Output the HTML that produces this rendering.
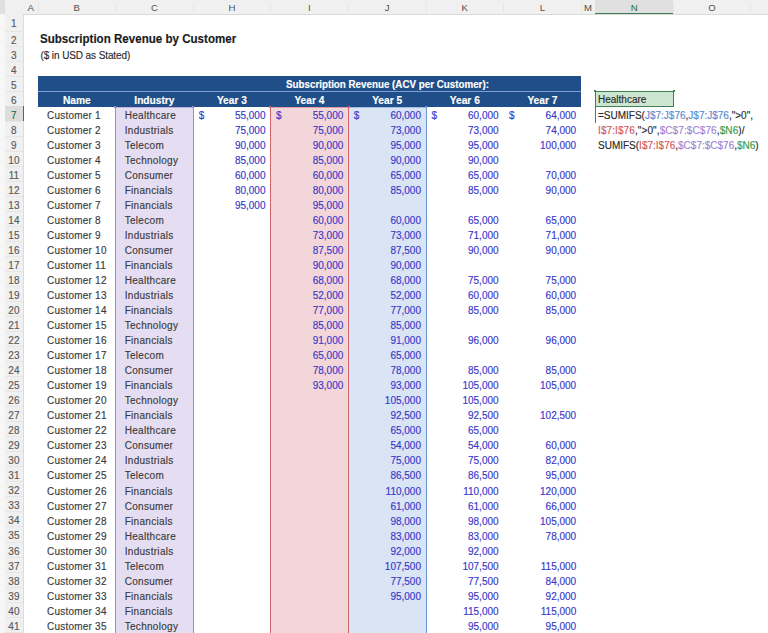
<!DOCTYPE html>
<html><head><meta charset="utf-8"><style>
html,body{margin:0;padding:0;}
body{width:768px;height:633px;overflow:hidden;position:relative;background:#fff;font-family:"Liberation Sans",sans-serif;}
body>div{position:absolute;}
.t{white-space:nowrap;-webkit-text-stroke:0.15px;}
</style></head><body>
<div style="left:0.00px;top:0.00px;width:768.00px;height:14.00px;background:#f0f0f0;"></div>
<div style="left:0.00px;top:13.60px;width:768.00px;height:1.00px;background:#dadada;"></div>
<div style="left:0.00px;top:0.00px;width:4.50px;height:14.00px;background:#e0e0e0;"></div>
<div style="left:4.50px;top:14.00px;width:18.80px;height:619.00px;background:#f0f0f0;"></div>
<div style="left:23.00px;top:14.00px;width:1.00px;height:619.00px;background:#dcdcdc;"></div>
<div style="left:0.00px;top:14.00px;width:4.50px;height:619.00px;background:#f7f7f7;"></div>
<div style="left:37.50px;top:3.00px;width:1.00px;height:10.00px;background:#e6e6e6;"></div>
<div style="left:115.00px;top:3.00px;width:1.00px;height:10.00px;background:#e6e6e6;"></div>
<div style="left:192.80px;top:3.00px;width:1.00px;height:10.00px;background:#e6e6e6;"></div>
<div style="left:270.00px;top:3.00px;width:1.00px;height:10.00px;background:#e6e6e6;"></div>
<div style="left:347.80px;top:3.00px;width:1.00px;height:10.00px;background:#e6e6e6;"></div>
<div style="left:425.50px;top:3.00px;width:1.00px;height:10.00px;background:#e6e6e6;"></div>
<div style="left:503.10px;top:3.00px;width:1.00px;height:10.00px;background:#e6e6e6;"></div>
<div style="left:580.70px;top:3.00px;width:1.00px;height:10.00px;background:#e6e6e6;"></div>
<div style="left:594.50px;top:3.00px;width:1.00px;height:10.00px;background:#e6e6e6;"></div>
<div style="left:672.80px;top:3.00px;width:1.00px;height:10.00px;background:#e6e6e6;"></div>
<div style="left:750.30px;top:3.00px;width:1.00px;height:10.00px;background:#e6e6e6;"></div>
<div style="left:827.50px;top:3.00px;width:1.00px;height:10.00px;background:#e6e6e6;"></div>
<div style="left:595.00px;top:0.00px;width:78.30px;height:14.00px;background:#e0e0e0;"></div>
<div style="left:595.00px;top:12.80px;width:78.30px;height:1.40px;background:#3f7d57;"></div>
<div class="t" style="left:23.30px;top:0.90px;-webkit-text-stroke:0;width:14.70px;text-align:center;line-height:14px;font-size:9.6px;color:#505050;">A</div>
<div class="t" style="left:38.00px;top:0.90px;-webkit-text-stroke:0;width:77.50px;text-align:center;line-height:14px;font-size:9.6px;color:#505050;">B</div>
<div class="t" style="left:115.50px;top:0.90px;-webkit-text-stroke:0;width:77.80px;text-align:center;line-height:14px;font-size:9.6px;color:#505050;">C</div>
<div class="t" style="left:193.30px;top:0.90px;-webkit-text-stroke:0;width:77.20px;text-align:center;line-height:14px;font-size:9.6px;color:#505050;">H</div>
<div class="t" style="left:270.50px;top:0.90px;-webkit-text-stroke:0;width:77.80px;text-align:center;line-height:14px;font-size:9.6px;color:#505050;">I</div>
<div class="t" style="left:348.30px;top:0.90px;-webkit-text-stroke:0;width:77.70px;text-align:center;line-height:14px;font-size:9.6px;color:#505050;">J</div>
<div class="t" style="left:426.00px;top:0.90px;-webkit-text-stroke:0;width:77.60px;text-align:center;line-height:14px;font-size:9.6px;color:#505050;">K</div>
<div class="t" style="left:503.60px;top:0.90px;-webkit-text-stroke:0;width:77.60px;text-align:center;line-height:14px;font-size:9.6px;color:#505050;">L</div>
<div class="t" style="left:581.20px;top:0.90px;-webkit-text-stroke:0;width:13.80px;text-align:center;line-height:14px;font-size:9.6px;color:#505050;">M</div>
<div class="t" style="left:595.00px;top:0.90px;-webkit-text-stroke:0;width:78.30px;text-align:center;line-height:14px;font-size:9.6px;color:#217346;">N</div>
<div class="t" style="left:673.30px;top:0.90px;-webkit-text-stroke:0;width:77.50px;text-align:center;line-height:14px;font-size:9.6px;color:#505050;">O</div>
<div class="t" style="left:750.80px;top:0.90px;-webkit-text-stroke:0;width:77.20px;text-align:center;line-height:14px;font-size:9.6px;color:#505050;">P</div>
<div style="left:4.50px;top:30.50px;width:18.80px;height:1.00px;background:#e6e6e6;"></div>
<div class="t" style="left:4.50px;top:16.00px;width:18.8px;text-align:center;line-height:16.50px;font-size:10px;color:#5a5a5a;">1</div>
<div style="left:4.50px;top:45.53px;width:18.80px;height:1.00px;background:#e6e6e6;"></div>
<div class="t" style="left:4.50px;top:32.50px;width:18.8px;text-align:center;line-height:15.03px;font-size:10px;color:#5a5a5a;">2</div>
<div style="left:4.50px;top:60.56px;width:18.80px;height:1.00px;background:#e6e6e6;"></div>
<div class="t" style="left:4.50px;top:47.53px;width:18.8px;text-align:center;line-height:15.03px;font-size:10px;color:#5a5a5a;">3</div>
<div style="left:4.50px;top:75.59px;width:18.80px;height:1.00px;background:#e6e6e6;"></div>
<div class="t" style="left:4.50px;top:62.56px;width:18.8px;text-align:center;line-height:15.03px;font-size:10px;color:#5a5a5a;">4</div>
<div style="left:4.50px;top:90.62px;width:18.80px;height:1.00px;background:#e6e6e6;"></div>
<div class="t" style="left:4.50px;top:77.59px;width:18.8px;text-align:center;line-height:15.03px;font-size:10px;color:#5a5a5a;">5</div>
<div style="left:4.50px;top:105.65px;width:18.80px;height:1.00px;background:#e6e6e6;"></div>
<div class="t" style="left:4.50px;top:92.62px;width:18.8px;text-align:center;line-height:15.03px;font-size:10px;color:#5a5a5a;">6</div>
<div style="left:4.50px;top:120.68px;width:18.80px;height:1.00px;background:#e6e6e6;"></div>
<div style="left:4.50px;top:106.15px;width:18.80px;height:15.03px;background:#dcdcdc;"></div>
<div style="left:22.50px;top:106.15px;width:1.50px;height:15.03px;background:#2e7d4f;"></div>
<div class="t" style="left:4.50px;top:107.65px;width:18.8px;text-align:center;line-height:15.03px;font-size:10px;color:#217346;">7</div>
<div style="left:4.50px;top:135.71px;width:18.80px;height:1.00px;background:#e6e6e6;"></div>
<div class="t" style="left:4.50px;top:122.68px;width:18.8px;text-align:center;line-height:15.03px;font-size:10px;color:#5a5a5a;">8</div>
<div style="left:4.50px;top:150.74px;width:18.80px;height:1.00px;background:#e6e6e6;"></div>
<div class="t" style="left:4.50px;top:137.71px;width:18.8px;text-align:center;line-height:15.03px;font-size:10px;color:#5a5a5a;">9</div>
<div style="left:4.50px;top:165.77px;width:18.80px;height:1.00px;background:#e6e6e6;"></div>
<div class="t" style="left:4.50px;top:152.74px;width:18.8px;text-align:center;line-height:15.03px;font-size:10px;color:#5a5a5a;">10</div>
<div style="left:4.50px;top:180.80px;width:18.80px;height:1.00px;background:#e6e6e6;"></div>
<div class="t" style="left:4.50px;top:167.77px;width:18.8px;text-align:center;line-height:15.03px;font-size:10px;color:#5a5a5a;">11</div>
<div style="left:4.50px;top:195.83px;width:18.80px;height:1.00px;background:#e6e6e6;"></div>
<div class="t" style="left:4.50px;top:182.80px;width:18.8px;text-align:center;line-height:15.03px;font-size:10px;color:#5a5a5a;">12</div>
<div style="left:4.50px;top:210.86px;width:18.80px;height:1.00px;background:#e6e6e6;"></div>
<div class="t" style="left:4.50px;top:197.83px;width:18.8px;text-align:center;line-height:15.03px;font-size:10px;color:#5a5a5a;">13</div>
<div style="left:4.50px;top:225.89px;width:18.80px;height:1.00px;background:#e6e6e6;"></div>
<div class="t" style="left:4.50px;top:212.86px;width:18.8px;text-align:center;line-height:15.03px;font-size:10px;color:#5a5a5a;">14</div>
<div style="left:4.50px;top:240.92px;width:18.80px;height:1.00px;background:#e6e6e6;"></div>
<div class="t" style="left:4.50px;top:227.89px;width:18.8px;text-align:center;line-height:15.03px;font-size:10px;color:#5a5a5a;">15</div>
<div style="left:4.50px;top:255.95px;width:18.80px;height:1.00px;background:#e6e6e6;"></div>
<div class="t" style="left:4.50px;top:242.92px;width:18.8px;text-align:center;line-height:15.03px;font-size:10px;color:#5a5a5a;">16</div>
<div style="left:4.50px;top:270.98px;width:18.80px;height:1.00px;background:#e6e6e6;"></div>
<div class="t" style="left:4.50px;top:257.95px;width:18.8px;text-align:center;line-height:15.03px;font-size:10px;color:#5a5a5a;">17</div>
<div style="left:4.50px;top:286.01px;width:18.80px;height:1.00px;background:#e6e6e6;"></div>
<div class="t" style="left:4.50px;top:272.98px;width:18.8px;text-align:center;line-height:15.03px;font-size:10px;color:#5a5a5a;">18</div>
<div style="left:4.50px;top:301.04px;width:18.80px;height:1.00px;background:#e6e6e6;"></div>
<div class="t" style="left:4.50px;top:288.01px;width:18.8px;text-align:center;line-height:15.03px;font-size:10px;color:#5a5a5a;">19</div>
<div style="left:4.50px;top:316.07px;width:18.80px;height:1.00px;background:#e6e6e6;"></div>
<div class="t" style="left:4.50px;top:303.04px;width:18.8px;text-align:center;line-height:15.03px;font-size:10px;color:#5a5a5a;">20</div>
<div style="left:4.50px;top:331.10px;width:18.80px;height:1.00px;background:#e6e6e6;"></div>
<div class="t" style="left:4.50px;top:318.07px;width:18.8px;text-align:center;line-height:15.03px;font-size:10px;color:#5a5a5a;">21</div>
<div style="left:4.50px;top:346.13px;width:18.80px;height:1.00px;background:#e6e6e6;"></div>
<div class="t" style="left:4.50px;top:333.10px;width:18.8px;text-align:center;line-height:15.03px;font-size:10px;color:#5a5a5a;">22</div>
<div style="left:4.50px;top:361.16px;width:18.80px;height:1.00px;background:#e6e6e6;"></div>
<div class="t" style="left:4.50px;top:348.13px;width:18.8px;text-align:center;line-height:15.03px;font-size:10px;color:#5a5a5a;">23</div>
<div style="left:4.50px;top:376.19px;width:18.80px;height:1.00px;background:#e6e6e6;"></div>
<div class="t" style="left:4.50px;top:363.16px;width:18.8px;text-align:center;line-height:15.03px;font-size:10px;color:#5a5a5a;">24</div>
<div style="left:4.50px;top:391.22px;width:18.80px;height:1.00px;background:#e6e6e6;"></div>
<div class="t" style="left:4.50px;top:378.19px;width:18.8px;text-align:center;line-height:15.03px;font-size:10px;color:#5a5a5a;">25</div>
<div style="left:4.50px;top:406.25px;width:18.80px;height:1.00px;background:#e6e6e6;"></div>
<div class="t" style="left:4.50px;top:393.22px;width:18.8px;text-align:center;line-height:15.03px;font-size:10px;color:#5a5a5a;">26</div>
<div style="left:4.50px;top:421.28px;width:18.80px;height:1.00px;background:#e6e6e6;"></div>
<div class="t" style="left:4.50px;top:408.25px;width:18.8px;text-align:center;line-height:15.03px;font-size:10px;color:#5a5a5a;">27</div>
<div style="left:4.50px;top:436.31px;width:18.80px;height:1.00px;background:#e6e6e6;"></div>
<div class="t" style="left:4.50px;top:423.28px;width:18.8px;text-align:center;line-height:15.03px;font-size:10px;color:#5a5a5a;">28</div>
<div style="left:4.50px;top:451.34px;width:18.80px;height:1.00px;background:#e6e6e6;"></div>
<div class="t" style="left:4.50px;top:438.31px;width:18.8px;text-align:center;line-height:15.03px;font-size:10px;color:#5a5a5a;">29</div>
<div style="left:4.50px;top:466.37px;width:18.80px;height:1.00px;background:#e6e6e6;"></div>
<div class="t" style="left:4.50px;top:453.34px;width:18.8px;text-align:center;line-height:15.03px;font-size:10px;color:#5a5a5a;">30</div>
<div style="left:4.50px;top:481.40px;width:18.80px;height:1.00px;background:#e6e6e6;"></div>
<div class="t" style="left:4.50px;top:468.37px;width:18.8px;text-align:center;line-height:15.03px;font-size:10px;color:#5a5a5a;">31</div>
<div style="left:4.50px;top:496.43px;width:18.80px;height:1.00px;background:#e6e6e6;"></div>
<div class="t" style="left:4.50px;top:483.40px;width:18.8px;text-align:center;line-height:15.03px;font-size:10px;color:#5a5a5a;">32</div>
<div style="left:4.50px;top:511.46px;width:18.80px;height:1.00px;background:#e6e6e6;"></div>
<div class="t" style="left:4.50px;top:498.43px;width:18.8px;text-align:center;line-height:15.03px;font-size:10px;color:#5a5a5a;">33</div>
<div style="left:4.50px;top:526.49px;width:18.80px;height:1.00px;background:#e6e6e6;"></div>
<div class="t" style="left:4.50px;top:513.46px;width:18.8px;text-align:center;line-height:15.03px;font-size:10px;color:#5a5a5a;">34</div>
<div style="left:4.50px;top:541.52px;width:18.80px;height:1.00px;background:#e6e6e6;"></div>
<div class="t" style="left:4.50px;top:528.49px;width:18.8px;text-align:center;line-height:15.03px;font-size:10px;color:#5a5a5a;">35</div>
<div style="left:4.50px;top:556.55px;width:18.80px;height:1.00px;background:#e6e6e6;"></div>
<div class="t" style="left:4.50px;top:543.52px;width:18.8px;text-align:center;line-height:15.03px;font-size:10px;color:#5a5a5a;">36</div>
<div style="left:4.50px;top:571.58px;width:18.80px;height:1.00px;background:#e6e6e6;"></div>
<div class="t" style="left:4.50px;top:558.55px;width:18.8px;text-align:center;line-height:15.03px;font-size:10px;color:#5a5a5a;">37</div>
<div style="left:4.50px;top:586.61px;width:18.80px;height:1.00px;background:#e6e6e6;"></div>
<div class="t" style="left:4.50px;top:573.58px;width:18.8px;text-align:center;line-height:15.03px;font-size:10px;color:#5a5a5a;">38</div>
<div style="left:4.50px;top:601.64px;width:18.80px;height:1.00px;background:#e6e6e6;"></div>
<div class="t" style="left:4.50px;top:588.61px;width:18.8px;text-align:center;line-height:15.03px;font-size:10px;color:#5a5a5a;">39</div>
<div style="left:4.50px;top:616.67px;width:18.80px;height:1.00px;background:#e6e6e6;"></div>
<div class="t" style="left:4.50px;top:603.64px;width:18.8px;text-align:center;line-height:15.03px;font-size:10px;color:#5a5a5a;">40</div>
<div style="left:4.50px;top:631.70px;width:18.80px;height:1.00px;background:#e6e6e6;"></div>
<div class="t" style="left:4.50px;top:618.67px;width:18.8px;text-align:center;line-height:15.03px;font-size:10px;color:#5a5a5a;">41</div>
<div style="left:4.50px;top:646.73px;width:18.80px;height:1.00px;background:#e6e6e6;"></div>
<div class="t" style="left:4.50px;top:633.70px;width:18.8px;text-align:center;line-height:15.03px;font-size:10px;color:#5a5a5a;">42</div>
<div class="t" style="left:40.30px;top:32.20px;transform:scaleX(0.95);transform-origin:0 0;font-weight:bold;font-size:12.2px;line-height:15.03px;color:#1b1b1b;">Subscription Revenue by Customer</div>
<div class="t" style="left:40.50px;top:47.63px;letter-spacing:-0.1px;font-size:10px;line-height:15px;color:#2b2b2b;">($ in USD as Stated)</div>
<div style="left:38.00px;top:76.40px;width:543.20px;height:30.40px;background:#1f4e88;"></div>
<div style="left:38.00px;top:91.10px;width:543.20px;height:1.00px;background:#7fa0d2;"></div>
<div class="t" style="left:286.20px;top:76.99px;transform:scaleX(0.961);transform-origin:0 0;font-weight:bold;font-size:10.2px;line-height:15px;color:#fff;">Subscription Revenue (ACV per Customer):</div>
<div class="t" style="left:38.00px;top:92.82px;width:77.50px;text-align:center;font-weight:bold;font-size:10.2px;line-height:15px;color:#fff;">Name</div>
<div class="t" style="left:115.50px;top:92.82px;width:77.80px;text-align:center;font-weight:bold;font-size:10.2px;line-height:15px;color:#fff;">Industry</div>
<div class="t" style="left:193.30px;top:92.82px;width:77.20px;text-align:center;font-weight:bold;font-size:10.2px;line-height:15px;color:#fff;">Year 3</div>
<div class="t" style="left:270.50px;top:92.82px;width:77.80px;text-align:center;font-weight:bold;font-size:10.2px;line-height:15px;color:#fff;">Year 4</div>
<div class="t" style="left:348.30px;top:92.82px;width:77.70px;text-align:center;font-weight:bold;font-size:10.2px;line-height:15px;color:#fff;">Year 5</div>
<div class="t" style="left:426.00px;top:92.82px;width:77.60px;text-align:center;font-weight:bold;font-size:10.2px;line-height:15px;color:#fff;">Year 6</div>
<div class="t" style="left:503.60px;top:92.82px;width:77.60px;text-align:center;font-weight:bold;font-size:10.2px;line-height:15px;color:#fff;">Year 7</div>
<div style="left:115.30px;top:106.60px;width:78.10px;height:528.40px;background:#e5def2;"></div>
<div style="left:348.50px;top:106.60px;width:77.60px;height:528.40px;background:#d9e4f5;"></div>
<div style="left:270.20px;top:106.60px;width:78.30px;height:528.40px;background:#f3d6d9;"></div>
<div style="left:114.80px;top:106.60px;width:1.00px;height:528.40px;background:#9c88cc;"></div>
<div style="left:192.90px;top:106.60px;width:1.00px;height:528.40px;background:#9c88cc;"></div>
<div style="left:115.30px;top:106.60px;width:78.10px;height:0.80px;background:#9c88cc;opacity:0.5;"></div>
<div style="left:114.30px;top:105.60px;width:2.00px;height:2.00px;background:#9c88cc;"></div>
<div style="left:192.40px;top:105.60px;width:2.00px;height:2.00px;background:#9c88cc;"></div>
<div style="left:348.00px;top:106.60px;width:1.00px;height:528.40px;background:#6e96d2;"></div>
<div style="left:425.60px;top:106.60px;width:1.00px;height:528.40px;background:#6e96d2;"></div>
<div style="left:348.50px;top:106.60px;width:77.60px;height:0.80px;background:#6e96d2;opacity:0.5;"></div>
<div style="left:347.50px;top:105.60px;width:2.00px;height:2.00px;background:#6e96d2;"></div>
<div style="left:425.10px;top:105.60px;width:2.00px;height:2.00px;background:#6e96d2;"></div>
<div style="left:269.70px;top:106.60px;width:1.00px;height:528.40px;background:#d0646c;"></div>
<div style="left:348.00px;top:106.60px;width:1.00px;height:528.40px;background:#d0646c;"></div>
<div style="left:270.20px;top:106.60px;width:78.30px;height:0.80px;background:#d0646c;opacity:0.5;"></div>
<div style="left:269.20px;top:105.60px;width:2.00px;height:2.00px;background:#d0646c;"></div>
<div style="left:347.50px;top:105.60px;width:2.00px;height:2.00px;background:#d0646c;"></div>
<div class="t" style="left:47.00px;top:107.75px;letter-spacing:0.22px;font-size:10px;line-height:15.03px;color:#3a3a3a;">Customer 1</div>
<div class="t" style="left:124.70px;top:107.75px;letter-spacing:0.3px;font-size:10px;line-height:15.03px;color:#3a3a3a;">Healthcare</div>
<div class="t" style="left:193.30px;top:107.75px;width:72.20px;text-align:right;font-size:10px;line-height:15.03px;color:#3838c8;">55,000</div>
<div class="t" style="left:198.80px;top:107.75px;font-size:10px;line-height:15.03px;color:#3838c8;">$</div>
<div class="t" style="left:270.50px;top:107.75px;width:72.80px;text-align:right;font-size:10px;line-height:15.03px;color:#3838c8;">55,000</div>
<div class="t" style="left:276.00px;top:107.75px;font-size:10px;line-height:15.03px;color:#3838c8;">$</div>
<div class="t" style="left:348.30px;top:107.75px;width:72.70px;text-align:right;font-size:10px;line-height:15.03px;color:#3838c8;">60,000</div>
<div class="t" style="left:353.80px;top:107.75px;font-size:10px;line-height:15.03px;color:#3838c8;">$</div>
<div class="t" style="left:426.00px;top:107.75px;width:72.60px;text-align:right;font-size:10px;line-height:15.03px;color:#3838c8;">60,000</div>
<div class="t" style="left:431.50px;top:107.75px;font-size:10px;line-height:15.03px;color:#3838c8;">$</div>
<div class="t" style="left:503.60px;top:107.75px;width:72.60px;text-align:right;font-size:10px;line-height:15.03px;color:#3838c8;">64,000</div>
<div class="t" style="left:509.10px;top:107.75px;font-size:10px;line-height:15.03px;color:#3838c8;">$</div>
<div class="t" style="left:47.00px;top:122.78px;letter-spacing:0.22px;font-size:10px;line-height:15.03px;color:#3a3a3a;">Customer 2</div>
<div class="t" style="left:124.70px;top:122.78px;letter-spacing:0.3px;font-size:10px;line-height:15.03px;color:#3a3a3a;">Industrials</div>
<div class="t" style="left:193.30px;top:122.78px;width:72.20px;text-align:right;font-size:10px;line-height:15.03px;color:#3838c8;">75,000</div>
<div class="t" style="left:270.50px;top:122.78px;width:72.80px;text-align:right;font-size:10px;line-height:15.03px;color:#3838c8;">75,000</div>
<div class="t" style="left:348.30px;top:122.78px;width:72.70px;text-align:right;font-size:10px;line-height:15.03px;color:#3838c8;">73,000</div>
<div class="t" style="left:426.00px;top:122.78px;width:72.60px;text-align:right;font-size:10px;line-height:15.03px;color:#3838c8;">73,000</div>
<div class="t" style="left:503.60px;top:122.78px;width:72.60px;text-align:right;font-size:10px;line-height:15.03px;color:#3838c8;">74,000</div>
<div class="t" style="left:47.00px;top:137.81px;letter-spacing:0.22px;font-size:10px;line-height:15.03px;color:#3a3a3a;">Customer 3</div>
<div class="t" style="left:124.70px;top:137.81px;letter-spacing:0.3px;font-size:10px;line-height:15.03px;color:#3a3a3a;">Telecom</div>
<div class="t" style="left:193.30px;top:137.81px;width:72.20px;text-align:right;font-size:10px;line-height:15.03px;color:#3838c8;">90,000</div>
<div class="t" style="left:270.50px;top:137.81px;width:72.80px;text-align:right;font-size:10px;line-height:15.03px;color:#3838c8;">90,000</div>
<div class="t" style="left:348.30px;top:137.81px;width:72.70px;text-align:right;font-size:10px;line-height:15.03px;color:#3838c8;">95,000</div>
<div class="t" style="left:426.00px;top:137.81px;width:72.60px;text-align:right;font-size:10px;line-height:15.03px;color:#3838c8;">95,000</div>
<div class="t" style="left:503.60px;top:137.81px;width:72.60px;text-align:right;font-size:10px;line-height:15.03px;color:#3838c8;">100,000</div>
<div class="t" style="left:47.00px;top:152.84px;letter-spacing:0.22px;font-size:10px;line-height:15.03px;color:#3a3a3a;">Customer 4</div>
<div class="t" style="left:124.70px;top:152.84px;letter-spacing:0.3px;font-size:10px;line-height:15.03px;color:#3a3a3a;">Technology</div>
<div class="t" style="left:193.30px;top:152.84px;width:72.20px;text-align:right;font-size:10px;line-height:15.03px;color:#3838c8;">85,000</div>
<div class="t" style="left:270.50px;top:152.84px;width:72.80px;text-align:right;font-size:10px;line-height:15.03px;color:#3838c8;">85,000</div>
<div class="t" style="left:348.30px;top:152.84px;width:72.70px;text-align:right;font-size:10px;line-height:15.03px;color:#3838c8;">90,000</div>
<div class="t" style="left:426.00px;top:152.84px;width:72.60px;text-align:right;font-size:10px;line-height:15.03px;color:#3838c8;">90,000</div>
<div class="t" style="left:47.00px;top:167.87px;letter-spacing:0.22px;font-size:10px;line-height:15.03px;color:#3a3a3a;">Customer 5</div>
<div class="t" style="left:124.70px;top:167.87px;letter-spacing:0.3px;font-size:10px;line-height:15.03px;color:#3a3a3a;">Consumer</div>
<div class="t" style="left:193.30px;top:167.87px;width:72.20px;text-align:right;font-size:10px;line-height:15.03px;color:#3838c8;">60,000</div>
<div class="t" style="left:270.50px;top:167.87px;width:72.80px;text-align:right;font-size:10px;line-height:15.03px;color:#3838c8;">60,000</div>
<div class="t" style="left:348.30px;top:167.87px;width:72.70px;text-align:right;font-size:10px;line-height:15.03px;color:#3838c8;">65,000</div>
<div class="t" style="left:426.00px;top:167.87px;width:72.60px;text-align:right;font-size:10px;line-height:15.03px;color:#3838c8;">65,000</div>
<div class="t" style="left:503.60px;top:167.87px;width:72.60px;text-align:right;font-size:10px;line-height:15.03px;color:#3838c8;">70,000</div>
<div class="t" style="left:47.00px;top:182.90px;letter-spacing:0.22px;font-size:10px;line-height:15.03px;color:#3a3a3a;">Customer 6</div>
<div class="t" style="left:124.70px;top:182.90px;letter-spacing:0.3px;font-size:10px;line-height:15.03px;color:#3a3a3a;">Financials</div>
<div class="t" style="left:193.30px;top:182.90px;width:72.20px;text-align:right;font-size:10px;line-height:15.03px;color:#3838c8;">80,000</div>
<div class="t" style="left:270.50px;top:182.90px;width:72.80px;text-align:right;font-size:10px;line-height:15.03px;color:#3838c8;">80,000</div>
<div class="t" style="left:348.30px;top:182.90px;width:72.70px;text-align:right;font-size:10px;line-height:15.03px;color:#3838c8;">85,000</div>
<div class="t" style="left:426.00px;top:182.90px;width:72.60px;text-align:right;font-size:10px;line-height:15.03px;color:#3838c8;">85,000</div>
<div class="t" style="left:503.60px;top:182.90px;width:72.60px;text-align:right;font-size:10px;line-height:15.03px;color:#3838c8;">90,000</div>
<div class="t" style="left:47.00px;top:197.93px;letter-spacing:0.22px;font-size:10px;line-height:15.03px;color:#3a3a3a;">Customer 7</div>
<div class="t" style="left:124.70px;top:197.93px;letter-spacing:0.3px;font-size:10px;line-height:15.03px;color:#3a3a3a;">Financials</div>
<div class="t" style="left:193.30px;top:197.93px;width:72.20px;text-align:right;font-size:10px;line-height:15.03px;color:#3838c8;">95,000</div>
<div class="t" style="left:270.50px;top:197.93px;width:72.80px;text-align:right;font-size:10px;line-height:15.03px;color:#3838c8;">95,000</div>
<div class="t" style="left:47.00px;top:212.96px;letter-spacing:0.22px;font-size:10px;line-height:15.03px;color:#3a3a3a;">Customer 8</div>
<div class="t" style="left:124.70px;top:212.96px;letter-spacing:0.3px;font-size:10px;line-height:15.03px;color:#3a3a3a;">Telecom</div>
<div class="t" style="left:270.50px;top:212.96px;width:72.80px;text-align:right;font-size:10px;line-height:15.03px;color:#3838c8;">60,000</div>
<div class="t" style="left:348.30px;top:212.96px;width:72.70px;text-align:right;font-size:10px;line-height:15.03px;color:#3838c8;">60,000</div>
<div class="t" style="left:426.00px;top:212.96px;width:72.60px;text-align:right;font-size:10px;line-height:15.03px;color:#3838c8;">65,000</div>
<div class="t" style="left:503.60px;top:212.96px;width:72.60px;text-align:right;font-size:10px;line-height:15.03px;color:#3838c8;">65,000</div>
<div class="t" style="left:47.00px;top:227.99px;letter-spacing:0.22px;font-size:10px;line-height:15.03px;color:#3a3a3a;">Customer 9</div>
<div class="t" style="left:124.70px;top:227.99px;letter-spacing:0.3px;font-size:10px;line-height:15.03px;color:#3a3a3a;">Industrials</div>
<div class="t" style="left:270.50px;top:227.99px;width:72.80px;text-align:right;font-size:10px;line-height:15.03px;color:#3838c8;">73,000</div>
<div class="t" style="left:348.30px;top:227.99px;width:72.70px;text-align:right;font-size:10px;line-height:15.03px;color:#3838c8;">73,000</div>
<div class="t" style="left:426.00px;top:227.99px;width:72.60px;text-align:right;font-size:10px;line-height:15.03px;color:#3838c8;">71,000</div>
<div class="t" style="left:503.60px;top:227.99px;width:72.60px;text-align:right;font-size:10px;line-height:15.03px;color:#3838c8;">71,000</div>
<div class="t" style="left:47.00px;top:243.02px;letter-spacing:0.22px;font-size:10px;line-height:15.03px;color:#3a3a3a;">Customer 10</div>
<div class="t" style="left:124.70px;top:243.02px;letter-spacing:0.3px;font-size:10px;line-height:15.03px;color:#3a3a3a;">Consumer</div>
<div class="t" style="left:270.50px;top:243.02px;width:72.80px;text-align:right;font-size:10px;line-height:15.03px;color:#3838c8;">87,500</div>
<div class="t" style="left:348.30px;top:243.02px;width:72.70px;text-align:right;font-size:10px;line-height:15.03px;color:#3838c8;">87,500</div>
<div class="t" style="left:426.00px;top:243.02px;width:72.60px;text-align:right;font-size:10px;line-height:15.03px;color:#3838c8;">90,000</div>
<div class="t" style="left:503.60px;top:243.02px;width:72.60px;text-align:right;font-size:10px;line-height:15.03px;color:#3838c8;">90,000</div>
<div class="t" style="left:47.00px;top:258.05px;letter-spacing:0.22px;font-size:10px;line-height:15.03px;color:#3a3a3a;">Customer 11</div>
<div class="t" style="left:124.70px;top:258.05px;letter-spacing:0.3px;font-size:10px;line-height:15.03px;color:#3a3a3a;">Financials</div>
<div class="t" style="left:270.50px;top:258.05px;width:72.80px;text-align:right;font-size:10px;line-height:15.03px;color:#3838c8;">90,000</div>
<div class="t" style="left:348.30px;top:258.05px;width:72.70px;text-align:right;font-size:10px;line-height:15.03px;color:#3838c8;">90,000</div>
<div class="t" style="left:47.00px;top:273.08px;letter-spacing:0.22px;font-size:10px;line-height:15.03px;color:#3a3a3a;">Customer 12</div>
<div class="t" style="left:124.70px;top:273.08px;letter-spacing:0.3px;font-size:10px;line-height:15.03px;color:#3a3a3a;">Healthcare</div>
<div class="t" style="left:270.50px;top:273.08px;width:72.80px;text-align:right;font-size:10px;line-height:15.03px;color:#3838c8;">68,000</div>
<div class="t" style="left:348.30px;top:273.08px;width:72.70px;text-align:right;font-size:10px;line-height:15.03px;color:#3838c8;">68,000</div>
<div class="t" style="left:426.00px;top:273.08px;width:72.60px;text-align:right;font-size:10px;line-height:15.03px;color:#3838c8;">75,000</div>
<div class="t" style="left:503.60px;top:273.08px;width:72.60px;text-align:right;font-size:10px;line-height:15.03px;color:#3838c8;">75,000</div>
<div class="t" style="left:47.00px;top:288.11px;letter-spacing:0.22px;font-size:10px;line-height:15.03px;color:#3a3a3a;">Customer 13</div>
<div class="t" style="left:124.70px;top:288.11px;letter-spacing:0.3px;font-size:10px;line-height:15.03px;color:#3a3a3a;">Industrials</div>
<div class="t" style="left:270.50px;top:288.11px;width:72.80px;text-align:right;font-size:10px;line-height:15.03px;color:#3838c8;">52,000</div>
<div class="t" style="left:348.30px;top:288.11px;width:72.70px;text-align:right;font-size:10px;line-height:15.03px;color:#3838c8;">52,000</div>
<div class="t" style="left:426.00px;top:288.11px;width:72.60px;text-align:right;font-size:10px;line-height:15.03px;color:#3838c8;">60,000</div>
<div class="t" style="left:503.60px;top:288.11px;width:72.60px;text-align:right;font-size:10px;line-height:15.03px;color:#3838c8;">60,000</div>
<div class="t" style="left:47.00px;top:303.14px;letter-spacing:0.22px;font-size:10px;line-height:15.03px;color:#3a3a3a;">Customer 14</div>
<div class="t" style="left:124.70px;top:303.14px;letter-spacing:0.3px;font-size:10px;line-height:15.03px;color:#3a3a3a;">Financials</div>
<div class="t" style="left:270.50px;top:303.14px;width:72.80px;text-align:right;font-size:10px;line-height:15.03px;color:#3838c8;">77,000</div>
<div class="t" style="left:348.30px;top:303.14px;width:72.70px;text-align:right;font-size:10px;line-height:15.03px;color:#3838c8;">77,000</div>
<div class="t" style="left:426.00px;top:303.14px;width:72.60px;text-align:right;font-size:10px;line-height:15.03px;color:#3838c8;">85,000</div>
<div class="t" style="left:503.60px;top:303.14px;width:72.60px;text-align:right;font-size:10px;line-height:15.03px;color:#3838c8;">85,000</div>
<div class="t" style="left:47.00px;top:318.17px;letter-spacing:0.22px;font-size:10px;line-height:15.03px;color:#3a3a3a;">Customer 15</div>
<div class="t" style="left:124.70px;top:318.17px;letter-spacing:0.3px;font-size:10px;line-height:15.03px;color:#3a3a3a;">Technology</div>
<div class="t" style="left:270.50px;top:318.17px;width:72.80px;text-align:right;font-size:10px;line-height:15.03px;color:#3838c8;">85,000</div>
<div class="t" style="left:348.30px;top:318.17px;width:72.70px;text-align:right;font-size:10px;line-height:15.03px;color:#3838c8;">85,000</div>
<div class="t" style="left:47.00px;top:333.20px;letter-spacing:0.22px;font-size:10px;line-height:15.03px;color:#3a3a3a;">Customer 16</div>
<div class="t" style="left:124.70px;top:333.20px;letter-spacing:0.3px;font-size:10px;line-height:15.03px;color:#3a3a3a;">Financials</div>
<div class="t" style="left:270.50px;top:333.20px;width:72.80px;text-align:right;font-size:10px;line-height:15.03px;color:#3838c8;">91,000</div>
<div class="t" style="left:348.30px;top:333.20px;width:72.70px;text-align:right;font-size:10px;line-height:15.03px;color:#3838c8;">91,000</div>
<div class="t" style="left:426.00px;top:333.20px;width:72.60px;text-align:right;font-size:10px;line-height:15.03px;color:#3838c8;">96,000</div>
<div class="t" style="left:503.60px;top:333.20px;width:72.60px;text-align:right;font-size:10px;line-height:15.03px;color:#3838c8;">96,000</div>
<div class="t" style="left:47.00px;top:348.23px;letter-spacing:0.22px;font-size:10px;line-height:15.03px;color:#3a3a3a;">Customer 17</div>
<div class="t" style="left:124.70px;top:348.23px;letter-spacing:0.3px;font-size:10px;line-height:15.03px;color:#3a3a3a;">Telecom</div>
<div class="t" style="left:270.50px;top:348.23px;width:72.80px;text-align:right;font-size:10px;line-height:15.03px;color:#3838c8;">65,000</div>
<div class="t" style="left:348.30px;top:348.23px;width:72.70px;text-align:right;font-size:10px;line-height:15.03px;color:#3838c8;">65,000</div>
<div class="t" style="left:47.00px;top:363.26px;letter-spacing:0.22px;font-size:10px;line-height:15.03px;color:#3a3a3a;">Customer 18</div>
<div class="t" style="left:124.70px;top:363.26px;letter-spacing:0.3px;font-size:10px;line-height:15.03px;color:#3a3a3a;">Consumer</div>
<div class="t" style="left:270.50px;top:363.26px;width:72.80px;text-align:right;font-size:10px;line-height:15.03px;color:#3838c8;">78,000</div>
<div class="t" style="left:348.30px;top:363.26px;width:72.70px;text-align:right;font-size:10px;line-height:15.03px;color:#3838c8;">78,000</div>
<div class="t" style="left:426.00px;top:363.26px;width:72.60px;text-align:right;font-size:10px;line-height:15.03px;color:#3838c8;">85,000</div>
<div class="t" style="left:503.60px;top:363.26px;width:72.60px;text-align:right;font-size:10px;line-height:15.03px;color:#3838c8;">85,000</div>
<div class="t" style="left:47.00px;top:378.29px;letter-spacing:0.22px;font-size:10px;line-height:15.03px;color:#3a3a3a;">Customer 19</div>
<div class="t" style="left:124.70px;top:378.29px;letter-spacing:0.3px;font-size:10px;line-height:15.03px;color:#3a3a3a;">Financials</div>
<div class="t" style="left:270.50px;top:378.29px;width:72.80px;text-align:right;font-size:10px;line-height:15.03px;color:#3838c8;">93,000</div>
<div class="t" style="left:348.30px;top:378.29px;width:72.70px;text-align:right;font-size:10px;line-height:15.03px;color:#3838c8;">93,000</div>
<div class="t" style="left:426.00px;top:378.29px;width:72.60px;text-align:right;font-size:10px;line-height:15.03px;color:#3838c8;">105,000</div>
<div class="t" style="left:503.60px;top:378.29px;width:72.60px;text-align:right;font-size:10px;line-height:15.03px;color:#3838c8;">105,000</div>
<div class="t" style="left:47.00px;top:393.32px;letter-spacing:0.22px;font-size:10px;line-height:15.03px;color:#3a3a3a;">Customer 20</div>
<div class="t" style="left:124.70px;top:393.32px;letter-spacing:0.3px;font-size:10px;line-height:15.03px;color:#3a3a3a;">Technology</div>
<div class="t" style="left:348.30px;top:393.32px;width:72.70px;text-align:right;font-size:10px;line-height:15.03px;color:#3838c8;">105,000</div>
<div class="t" style="left:426.00px;top:393.32px;width:72.60px;text-align:right;font-size:10px;line-height:15.03px;color:#3838c8;">105,000</div>
<div class="t" style="left:47.00px;top:408.35px;letter-spacing:0.22px;font-size:10px;line-height:15.03px;color:#3a3a3a;">Customer 21</div>
<div class="t" style="left:124.70px;top:408.35px;letter-spacing:0.3px;font-size:10px;line-height:15.03px;color:#3a3a3a;">Financials</div>
<div class="t" style="left:348.30px;top:408.35px;width:72.70px;text-align:right;font-size:10px;line-height:15.03px;color:#3838c8;">92,500</div>
<div class="t" style="left:426.00px;top:408.35px;width:72.60px;text-align:right;font-size:10px;line-height:15.03px;color:#3838c8;">92,500</div>
<div class="t" style="left:503.60px;top:408.35px;width:72.60px;text-align:right;font-size:10px;line-height:15.03px;color:#3838c8;">102,500</div>
<div class="t" style="left:47.00px;top:423.38px;letter-spacing:0.22px;font-size:10px;line-height:15.03px;color:#3a3a3a;">Customer 22</div>
<div class="t" style="left:124.70px;top:423.38px;letter-spacing:0.3px;font-size:10px;line-height:15.03px;color:#3a3a3a;">Healthcare</div>
<div class="t" style="left:348.30px;top:423.38px;width:72.70px;text-align:right;font-size:10px;line-height:15.03px;color:#3838c8;">65,000</div>
<div class="t" style="left:426.00px;top:423.38px;width:72.60px;text-align:right;font-size:10px;line-height:15.03px;color:#3838c8;">65,000</div>
<div class="t" style="left:47.00px;top:438.41px;letter-spacing:0.22px;font-size:10px;line-height:15.03px;color:#3a3a3a;">Customer 23</div>
<div class="t" style="left:124.70px;top:438.41px;letter-spacing:0.3px;font-size:10px;line-height:15.03px;color:#3a3a3a;">Consumer</div>
<div class="t" style="left:348.30px;top:438.41px;width:72.70px;text-align:right;font-size:10px;line-height:15.03px;color:#3838c8;">54,000</div>
<div class="t" style="left:426.00px;top:438.41px;width:72.60px;text-align:right;font-size:10px;line-height:15.03px;color:#3838c8;">54,000</div>
<div class="t" style="left:503.60px;top:438.41px;width:72.60px;text-align:right;font-size:10px;line-height:15.03px;color:#3838c8;">60,000</div>
<div class="t" style="left:47.00px;top:453.44px;letter-spacing:0.22px;font-size:10px;line-height:15.03px;color:#3a3a3a;">Customer 24</div>
<div class="t" style="left:124.70px;top:453.44px;letter-spacing:0.3px;font-size:10px;line-height:15.03px;color:#3a3a3a;">Industrials</div>
<div class="t" style="left:348.30px;top:453.44px;width:72.70px;text-align:right;font-size:10px;line-height:15.03px;color:#3838c8;">75,000</div>
<div class="t" style="left:426.00px;top:453.44px;width:72.60px;text-align:right;font-size:10px;line-height:15.03px;color:#3838c8;">75,000</div>
<div class="t" style="left:503.60px;top:453.44px;width:72.60px;text-align:right;font-size:10px;line-height:15.03px;color:#3838c8;">82,000</div>
<div class="t" style="left:47.00px;top:468.47px;letter-spacing:0.22px;font-size:10px;line-height:15.03px;color:#3a3a3a;">Customer 25</div>
<div class="t" style="left:124.70px;top:468.47px;letter-spacing:0.3px;font-size:10px;line-height:15.03px;color:#3a3a3a;">Telecom</div>
<div class="t" style="left:348.30px;top:468.47px;width:72.70px;text-align:right;font-size:10px;line-height:15.03px;color:#3838c8;">86,500</div>
<div class="t" style="left:426.00px;top:468.47px;width:72.60px;text-align:right;font-size:10px;line-height:15.03px;color:#3838c8;">86,500</div>
<div class="t" style="left:503.60px;top:468.47px;width:72.60px;text-align:right;font-size:10px;line-height:15.03px;color:#3838c8;">95,000</div>
<div class="t" style="left:47.00px;top:483.50px;letter-spacing:0.22px;font-size:10px;line-height:15.03px;color:#3a3a3a;">Customer 26</div>
<div class="t" style="left:124.70px;top:483.50px;letter-spacing:0.3px;font-size:10px;line-height:15.03px;color:#3a3a3a;">Financials</div>
<div class="t" style="left:348.30px;top:483.50px;width:72.70px;text-align:right;font-size:10px;line-height:15.03px;color:#3838c8;">110,000</div>
<div class="t" style="left:426.00px;top:483.50px;width:72.60px;text-align:right;font-size:10px;line-height:15.03px;color:#3838c8;">110,000</div>
<div class="t" style="left:503.60px;top:483.50px;width:72.60px;text-align:right;font-size:10px;line-height:15.03px;color:#3838c8;">120,000</div>
<div class="t" style="left:47.00px;top:498.53px;letter-spacing:0.22px;font-size:10px;line-height:15.03px;color:#3a3a3a;">Customer 27</div>
<div class="t" style="left:124.70px;top:498.53px;letter-spacing:0.3px;font-size:10px;line-height:15.03px;color:#3a3a3a;">Consumer</div>
<div class="t" style="left:348.30px;top:498.53px;width:72.70px;text-align:right;font-size:10px;line-height:15.03px;color:#3838c8;">61,000</div>
<div class="t" style="left:426.00px;top:498.53px;width:72.60px;text-align:right;font-size:10px;line-height:15.03px;color:#3838c8;">61,000</div>
<div class="t" style="left:503.60px;top:498.53px;width:72.60px;text-align:right;font-size:10px;line-height:15.03px;color:#3838c8;">66,000</div>
<div class="t" style="left:47.00px;top:513.56px;letter-spacing:0.22px;font-size:10px;line-height:15.03px;color:#3a3a3a;">Customer 28</div>
<div class="t" style="left:124.70px;top:513.56px;letter-spacing:0.3px;font-size:10px;line-height:15.03px;color:#3a3a3a;">Financials</div>
<div class="t" style="left:348.30px;top:513.56px;width:72.70px;text-align:right;font-size:10px;line-height:15.03px;color:#3838c8;">98,000</div>
<div class="t" style="left:426.00px;top:513.56px;width:72.60px;text-align:right;font-size:10px;line-height:15.03px;color:#3838c8;">98,000</div>
<div class="t" style="left:503.60px;top:513.56px;width:72.60px;text-align:right;font-size:10px;line-height:15.03px;color:#3838c8;">105,000</div>
<div class="t" style="left:47.00px;top:528.59px;letter-spacing:0.22px;font-size:10px;line-height:15.03px;color:#3a3a3a;">Customer 29</div>
<div class="t" style="left:124.70px;top:528.59px;letter-spacing:0.3px;font-size:10px;line-height:15.03px;color:#3a3a3a;">Healthcare</div>
<div class="t" style="left:348.30px;top:528.59px;width:72.70px;text-align:right;font-size:10px;line-height:15.03px;color:#3838c8;">83,000</div>
<div class="t" style="left:426.00px;top:528.59px;width:72.60px;text-align:right;font-size:10px;line-height:15.03px;color:#3838c8;">83,000</div>
<div class="t" style="left:503.60px;top:528.59px;width:72.60px;text-align:right;font-size:10px;line-height:15.03px;color:#3838c8;">78,000</div>
<div class="t" style="left:47.00px;top:543.62px;letter-spacing:0.22px;font-size:10px;line-height:15.03px;color:#3a3a3a;">Customer 30</div>
<div class="t" style="left:124.70px;top:543.62px;letter-spacing:0.3px;font-size:10px;line-height:15.03px;color:#3a3a3a;">Industrials</div>
<div class="t" style="left:348.30px;top:543.62px;width:72.70px;text-align:right;font-size:10px;line-height:15.03px;color:#3838c8;">92,000</div>
<div class="t" style="left:426.00px;top:543.62px;width:72.60px;text-align:right;font-size:10px;line-height:15.03px;color:#3838c8;">92,000</div>
<div class="t" style="left:47.00px;top:558.65px;letter-spacing:0.22px;font-size:10px;line-height:15.03px;color:#3a3a3a;">Customer 31</div>
<div class="t" style="left:124.70px;top:558.65px;letter-spacing:0.3px;font-size:10px;line-height:15.03px;color:#3a3a3a;">Telecom</div>
<div class="t" style="left:348.30px;top:558.65px;width:72.70px;text-align:right;font-size:10px;line-height:15.03px;color:#3838c8;">107,500</div>
<div class="t" style="left:426.00px;top:558.65px;width:72.60px;text-align:right;font-size:10px;line-height:15.03px;color:#3838c8;">107,500</div>
<div class="t" style="left:503.60px;top:558.65px;width:72.60px;text-align:right;font-size:10px;line-height:15.03px;color:#3838c8;">115,000</div>
<div class="t" style="left:47.00px;top:573.68px;letter-spacing:0.22px;font-size:10px;line-height:15.03px;color:#3a3a3a;">Customer 32</div>
<div class="t" style="left:124.70px;top:573.68px;letter-spacing:0.3px;font-size:10px;line-height:15.03px;color:#3a3a3a;">Consumer</div>
<div class="t" style="left:348.30px;top:573.68px;width:72.70px;text-align:right;font-size:10px;line-height:15.03px;color:#3838c8;">77,500</div>
<div class="t" style="left:426.00px;top:573.68px;width:72.60px;text-align:right;font-size:10px;line-height:15.03px;color:#3838c8;">77,500</div>
<div class="t" style="left:503.60px;top:573.68px;width:72.60px;text-align:right;font-size:10px;line-height:15.03px;color:#3838c8;">84,000</div>
<div class="t" style="left:47.00px;top:588.71px;letter-spacing:0.22px;font-size:10px;line-height:15.03px;color:#3a3a3a;">Customer 33</div>
<div class="t" style="left:124.70px;top:588.71px;letter-spacing:0.3px;font-size:10px;line-height:15.03px;color:#3a3a3a;">Financials</div>
<div class="t" style="left:348.30px;top:588.71px;width:72.70px;text-align:right;font-size:10px;line-height:15.03px;color:#3838c8;">95,000</div>
<div class="t" style="left:426.00px;top:588.71px;width:72.60px;text-align:right;font-size:10px;line-height:15.03px;color:#3838c8;">95,000</div>
<div class="t" style="left:503.60px;top:588.71px;width:72.60px;text-align:right;font-size:10px;line-height:15.03px;color:#3838c8;">92,000</div>
<div class="t" style="left:47.00px;top:603.74px;letter-spacing:0.22px;font-size:10px;line-height:15.03px;color:#3a3a3a;">Customer 34</div>
<div class="t" style="left:124.70px;top:603.74px;letter-spacing:0.3px;font-size:10px;line-height:15.03px;color:#3a3a3a;">Financials</div>
<div class="t" style="left:426.00px;top:603.74px;width:72.60px;text-align:right;font-size:10px;line-height:15.03px;color:#3838c8;">115,000</div>
<div class="t" style="left:503.60px;top:603.74px;width:72.60px;text-align:right;font-size:10px;line-height:15.03px;color:#3838c8;">115,000</div>
<div class="t" style="left:47.00px;top:618.77px;letter-spacing:0.22px;font-size:10px;line-height:15.03px;color:#3a3a3a;">Customer 35</div>
<div class="t" style="left:124.70px;top:618.77px;letter-spacing:0.3px;font-size:10px;line-height:15.03px;color:#3a3a3a;">Technology</div>
<div class="t" style="left:426.00px;top:618.77px;width:72.60px;text-align:right;font-size:10px;line-height:15.03px;color:#3838c8;">95,000</div>
<div class="t" style="left:503.60px;top:618.77px;width:72.60px;text-align:right;font-size:10px;line-height:15.03px;color:#3838c8;">95,000</div>
<div style="left:594.80px;top:91.00px;width:79.00px;height:16.00px;background:#cde6d2;border:1px solid #3f8256;box-sizing:border-box;"></div>
<div style="left:594.30px;top:90.30px;width:2.00px;height:2.00px;background:#3f8256;"></div>
<div style="left:673.30px;top:90.30px;width:2.00px;height:2.00px;background:#3f8256;"></div>
<div class="t" style="left:598.00px;top:92.20px;font-size:10px;line-height:15px;color:#2a2a2a;">Healthcare</div>
<div style="left:594.80px;top:106.00px;width:1.20px;height:16.50px;background:#3f8256;"></div>
<div class="t" style="left:598.00px;top:107.75px;letter-spacing:0.0px;font-size:10px;line-height:15.03px;white-space:nowrap;"><span style="color:#2a2a2a">=SUMIFS(</span><span style="color:#5a8ad2">J$7:J$76</span><span style="color:#2a2a2a">,</span><span style="color:#5a8ad2">J$7:J$76</span><span style="color:#2a2a2a">,"&gt;0",</span></div>
<div class="t" style="left:598.00px;top:122.78px;letter-spacing:0.1px;font-size:10px;line-height:15.03px;white-space:nowrap;"><span style="color:#d2575c">I$7:I$76</span><span style="color:#2a2a2a">,"&gt;0",</span><span style="color:#9f84d2">$C$7:$C$76</span><span style="color:#2a2a2a">,</span><span style="color:#3b9a4a">$N6</span><span style="color:#2a2a2a">)/</span></div>
<div class="t" style="left:598.00px;top:137.81px;letter-spacing:0.0px;font-size:10px;line-height:15.03px;white-space:nowrap;"><span style="color:#2a2a2a">SUMIFS(</span><span style="color:#d2575c">I$7:I$76</span><span style="color:#2a2a2a">,</span><span style="color:#9f84d2">$C$7:$C$76</span><span style="color:#2a2a2a">,</span><span style="color:#3b9a4a">$N6</span><span style="color:#2a2a2a">)</span></div>
</body></html>
